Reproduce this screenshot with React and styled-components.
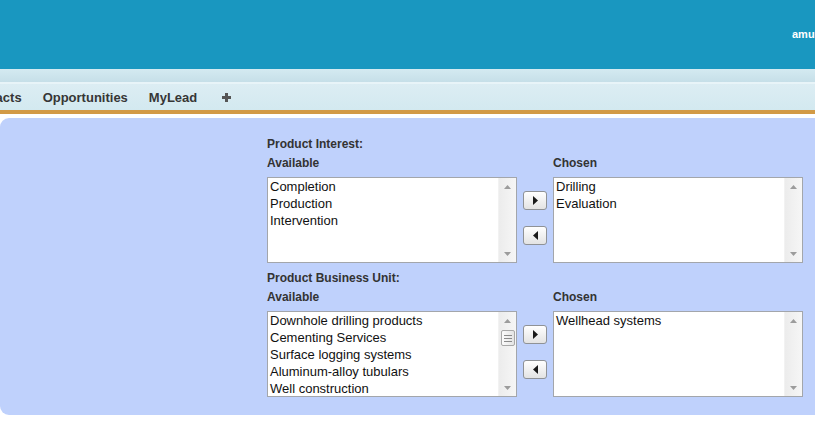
import React from "react";
import styled, { createGlobalStyle } from "styled-components";

const Global = createGlobalStyle`
  html, body { margin: 0; padding: 0; background: #ffffff; overflow: hidden; }
  body { font-family: Arial, "Liberation Sans", sans-serif; }
`;

const Page = styled.div`
  width: 815px;
  height: 428px;
  overflow: hidden;
  background: #ffffff;
`;

const Header = styled.header`
  height: 69px;
  background: #1997c0;
  display: flex;
  align-items: center;
`;

const User = styled.span`
  margin-left: auto;
  width: 23px;
  white-space: nowrap;
  color: #ffffff;
  font-size: 11px;
  font-weight: bold;
  padding-bottom: 2px;
`;

const Strip = styled.div`
  height: 13px;
  background: linear-gradient(#d4eaf1, #c6dfe8);
`;

const TabBar = styled.nav`
  height: 28px;
  box-sizing: border-box;
  border-top: 2px solid #e8f4f8;
  background: linear-gradient(#dcedf3, #d3e9f0);
  display: flex;
  align-items: center;
  gap: 21px;
`;

const Tab = styled.span`
  font-size: 13px;
  font-weight: bold;
  color: #363636;
  white-space: nowrap;
  margin-left: ${(p) => (p.$lead ? "-34px" : "0")};
`;

const PlusTab = styled.span`
  display: flex;
  margin-left: 4px;
`;

const Rule = styled.div`
  height: 4px;
  background: #d29a46;
  margin-bottom: 4px;
`;

const Panel = styled.main`
  height: 297px;
  box-sizing: border-box;
  background: #bfd1fc;
  border-radius: 9px 0 0 9px;
  padding: 19px 0 18px 267px;
`;

const Section = styled.section`
  margin-bottom: 8px;
`;

const SectionTitle = styled.div`
  font-size: 12px;
  font-weight: bold;
  line-height: 14px;
  color: #333333;
  margin-bottom: 5px;
`;

const Picker = styled.div`
  display: grid;
  grid-template-columns: 250px 36px 250px;
  grid-template-rows: 14px 86px;
  row-gap: 7px;
`;

const ColHead = styled.div`
  font-size: 12px;
  font-weight: bold;
  line-height: 14px;
  color: #333333;
`;

const Box = styled.div`
  box-sizing: border-box;
  border: 1px solid #a3a6ab;
  background: #ffffff;
  display: flex;
  overflow: hidden;
`;

const Items = styled.div`
  flex: 1;
  padding: 0 2px;
  font-size: 13px;
  line-height: 17px;
  color: #111111;
  white-space: nowrap;
  overflow: hidden;
`;

const Scroll = styled.div`
  width: 17px;
  background: linear-gradient(90deg, #ececec, #f6f6f6);
  border-left: 1px solid #f2f2f2;
  display: flex;
  flex-direction: column;
  align-items: center;
`;

const ArrowCell = styled.div`
  height: 17px;
  width: 100%;
  display: flex;
  align-items: center;
  justify-content: center;
  margin-top: ${(p) => (p.$down ? "auto" : "0")};
`;

const Thumb = styled.div`
  box-sizing: border-box;
  width: 14px;
  height: 16px;
  margin-top: 1px;
  border: 1px solid #a8a8a8;
  border-radius: 2px;
  background: linear-gradient(90deg, #fbfbfb, #e4e4e4);
  display: flex;
  align-items: center;
  justify-content: center;
`;

const Buttons = styled.div`
  display: flex;
  flex-direction: column;
  align-items: center;
  padding-top: 14px;
  gap: 16px;
`;

const MoveButton = styled.button`
  box-sizing: border-box;
  width: 24px;
  height: 19px;
  padding: 0;
  border: 1px solid #8f9296;
  border-radius: 3px;
  background: linear-gradient(#ffffff, #e3e3e3);
  display: flex;
  align-items: center;
  justify-content: center;
`;

const SmallArrow = ({ up }) => (
  <svg width="7" height="4" viewBox="0 0 7 4">
    <path d={up ? "M0 4 L3.5 0 L7 4 Z" : "M0 0 L3.5 4 L7 0 Z"} fill="#9c9c9c" />
  </svg>
);

const Grip = () => (
  <svg width="8" height="7" viewBox="0 0 8 7">
    <path d="M0 0.5H8M0 3.5H8M0 6.5H8" stroke="#8a8a8a" strokeWidth="1" />
  </svg>
);

const Triangle = ({ left }) => (
  <svg width="5" height="9" viewBox="0 0 5 9">
    <path d={left ? "M5 0 L0 4.5 L5 9 Z" : "M0 0 L5 4.5 L0 9 Z"} fill="#1a1a1a" />
  </svg>
);

const Plus = () => (
  <svg width="9" height="9" viewBox="0 0 9 9">
    <rect x="3" y="0" width="3" height="9" fill="#555555" />
    <rect x="0" y="3" width="9" height="3" fill="#555555" />
  </svg>
);

const ListBox = ({ items, thumb }) => (
  <Box>
    <Items>
      {items.map((it) => (
        <div key={it}>{it}</div>
      ))}
    </Items>
    <Scroll>
      <ArrowCell>
        <SmallArrow up />
      </ArrowCell>
      {thumb && (
        <Thumb>
          <Grip />
        </Thumb>
      )}
      <ArrowCell $down>
        <SmallArrow />
      </ArrowCell>
    </Scroll>
  </Box>
);

const MultiPicker = ({ title, available, chosen, thumb }) => (
  <Section>
    <SectionTitle>{title}</SectionTitle>
    <Picker>
      <ColHead>Available</ColHead>
      <span />
      <ColHead>Chosen</ColHead>
      <ListBox items={available} thumb={thumb} />
      <Buttons>
        <MoveButton type="button" aria-label="Add">
          <Triangle />
        </MoveButton>
        <MoveButton type="button" aria-label="Remove">
          <Triangle left />
        </MoveButton>
      </Buttons>
      <ListBox items={chosen} />
    </Picker>
  </Section>
);

export default function App() {
  return (
    <Page>
      <Global />
      <Header>
        <User>amulya</User>
      </Header>
      <Strip />
      <TabBar>
        <Tab $lead>Contacts</Tab>
        <Tab>Opportunities</Tab>
        <Tab>MyLead</Tab>
        <PlusTab>
          <Plus />
        </PlusTab>
      </TabBar>
      <Rule />
      <Panel>
        <MultiPicker
          title="Product Interest:"
          available={["Completion", "Production", "Intervention"]}
          chosen={["Drilling", "Evaluation"]}
        />
        <MultiPicker
          title="Product Business Unit:"
          available={[
            "Downhole drilling products",
            "Cementing Services",
            "Surface logging systems",
            "Aluminum-alloy tubulars",
            "Well construction",
          ]}
          chosen={["Wellhead systems"]}
          thumb
        />
      </Panel>
    </Page>
  );
}
